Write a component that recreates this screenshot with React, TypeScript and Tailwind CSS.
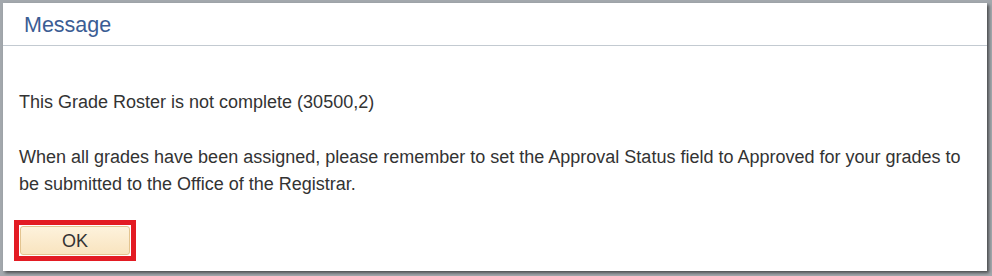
import React from "react";

export default function App() {
  return (
    <div
      className="w-[992px] h-[276px] bg-[#a3a8ad] pt-[3px] pl-[3px] overflow-hidden"
      style={{ fontFamily: '"Liberation Sans", Arial, sans-serif' }}
    >
      <div className="w-[984px] h-[268px] bg-white shadow-[2px_2px_3px_rgba(0,0,0,0.55)] flex flex-col">
        <div className="h-[43px] border-b border-[#c3cad1] flex items-center pl-[21px] shrink-0">
          <span className="text-[21.5px] text-[#3b5d94] leading-none mt-[4px]">Message</span>
        </div>
        <div className="pl-[16px] pr-[16px] pt-[43px] text-[18px] text-[#333333] leading-[27px]">
          <p>This Grade Roster is not complete (30500,2)</p>
          <p className="mt-[28px]">
            When all grades have been assigned, please remember to set the Approval Status field to Approved for your grades to be submitted to the Office of the Registrar.
          </p>
        </div>
        <div className="pl-[11px] mt-[22px]">
          <div className="w-[122px] h-[41px] border-[5px] border-[#e31b23] p-[1px] flex">
            <button className="flex-1 rounded-[3px] border border-[#e3c48f] bg-gradient-to-b from-[#fdf2dc] to-[#f9e4bf] text-[18px] text-[#333333] leading-none flex items-center justify-center pt-[1px]">
              OK
            </button>
          </div>
        </div>
      </div>
    </div>
  );
}
